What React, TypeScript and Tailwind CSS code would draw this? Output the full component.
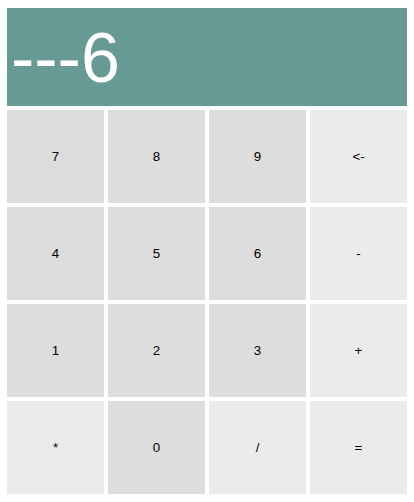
import React from "react";

const keys: { label: string; op?: boolean }[] = [
  { label: "7" },
  { label: "8" },
  { label: "9" },
  { label: "<-", op: true },
  { label: "4" },
  { label: "5" },
  { label: "6" },
  { label: "-", op: true },
  { label: "1" },
  { label: "2" },
  { label: "3" },
  { label: "+", op: true },
  { label: "*", op: true },
  { label: "0" },
  { label: "/", op: true },
  { label: "=", op: true },
];

export default function App() {
  return (
    <div className="w-[414px] h-[502px] bg-white px-[7px] pt-[8px] pb-[8px] flex flex-col gap-[4px] font-['Liberation_Sans',Arial,sans-serif]">
      <div className="h-[98px] bg-[#679a95] text-white text-[70px] leading-[80px] pl-[4px] pt-[10px] overflow-hidden whitespace-nowrap">
        ---6
      </div>
      <div className="grid grid-cols-4 gap-[4px]">
        {keys.map((k) => (
          <button
            key={k.label}
            className={
              "h-[93px] flex items-center justify-center text-[13.333px] text-black " +
              (k.op ? "bg-[#ebebeb]" : "bg-[#dddddd]")
            }
          >
            {k.label}
          </button>
        ))}
      </div>
    </div>
  );
}
